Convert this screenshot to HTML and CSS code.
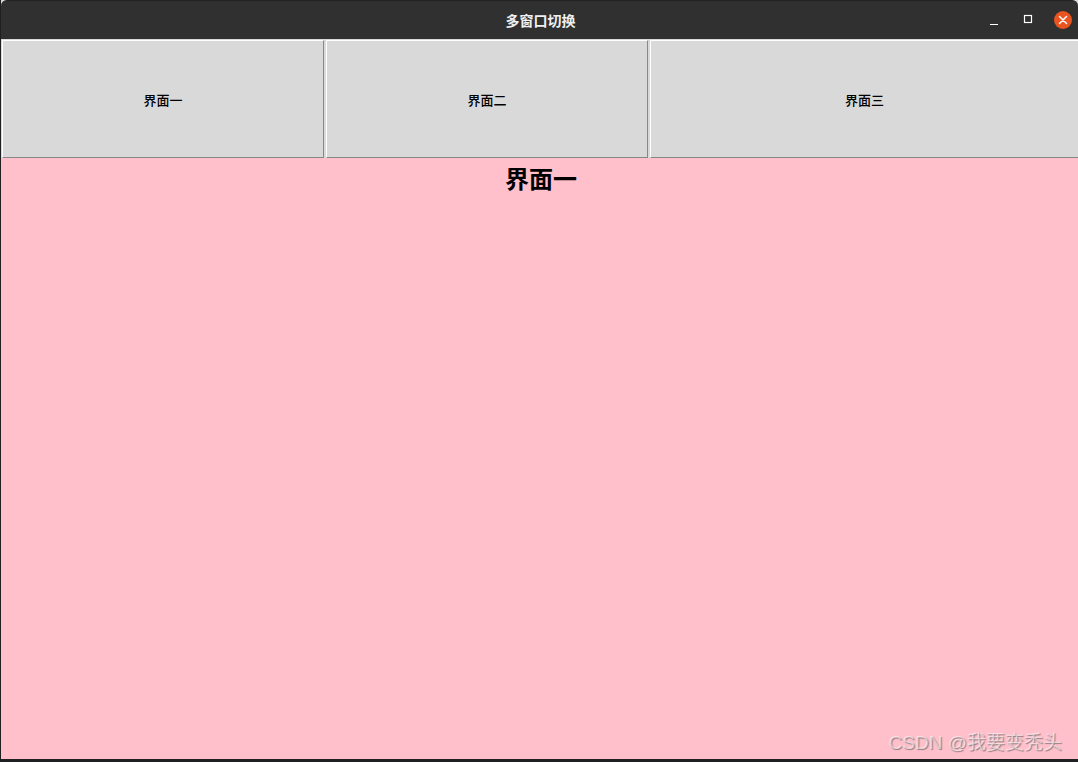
FILE: index.html
```html
<!DOCTYPE html>
<html lang="zh">
<head>
<meta charset="utf-8">
<title>多窗口切换</title>
<link rel="stylesheet" href="styles.css">
</head>
<body>
<div class="window">
  <header class="titlebar">
    <span class="title">多窗口切换</span>
    <div class="controls">
      <span class="ctl ctl-min"><svg width="12" height="12" viewBox="0 0 12 12"><rect x="1" y="8" width="8" height="1" fill="#fff"/></svg></span>
      <span class="ctl ctl-max"><svg width="12" height="12" viewBox="0 0 12 12"><rect x="1.5" y="1.5" width="7" height="7" fill="none" stroke="#fff" stroke-width="1.2"/></svg></span>
      <span class="ctl ctl-close"><svg width="18" height="18" viewBox="0 0 18 18"><circle cx="9" cy="9" r="9" fill="#e95420"/><path d="M5.5 5.5 L12.5 12.5 M12.5 5.5 L5.5 12.5" stroke="#fff" stroke-width="1.5" stroke-linecap="round"/></svg></span>
    </div>
  </header>
  <nav class="tabs">
    <button class="tab">界面一</button>
    <button class="tab">界面二</button>
    <button class="tab">界面三</button>
  </nav>
  <main class="page">
    <h1 class="page-title">界面一</h1>
    <div class="watermark">CSDN @我要变秃头</div>
  </main>
</div>
</body>
</html>
```
FILE: styles.css
```css
html, body {
  margin: 0;
  padding: 0;
}
body {
  width: 1078px;
  height: 762px;
  overflow: hidden;
  background: #1f2022;
  font-family: "Noto Sans CJK SC", "Noto Sans", sans-serif;
}
.window {
  margin-left: 1px;
  width: 1077px;
  height: 759px;
  display: flex;
  flex-direction: column;
  background: #d9d9d9;
}
.titlebar {
  height: 38px;
  flex: none;
  background: #303030;
  border-top: 1px solid #222;
  border-top-left-radius: 6px;
  border-top-right-radius: 6px;
  display: flex;
  align-items: center;
  justify-content: center;
  position: relative;
}
.title {
  color: #f0f0f0;
  font-size: 14px;
  font-weight: 700;
  margin-left: 2px;
}
.controls {
  position: absolute;
  right: 6px;
  top: 10px;
  display: flex;
  align-items: center;
  gap: 16px;
}
.ctl {
  display: flex;
  align-items: center;
  justify-content: center;
  width: 18px;
  height: 18px;
}
.ctl-min svg { margin-top: 4px; }
.tabs {
  flex: none;
  display: grid;
  grid-template-columns: 322px 322px 1fr;
  column-gap: 2px;
  padding: 1px 0 0 1px;
  height: 118px;
  background: #d9d9d9;
}
.tab {
  margin: 0;
  padding: 0;
  background: #d9d9d9;
  border: 1px solid #fff;
  border-right-color: #888;
  border-bottom-color: #888;
  font-family: "Noto Sans CJK SC", "Noto Sans", sans-serif;
  font-size: 13px;
  font-weight: 500;
  color: #000;
  line-height: 1;
}
.tab:last-child { border-right: none; }
.page {
  flex: 1;
  background: #ffc0cb;
  display: flex;
  flex-direction: column;
  align-items: center;
  position: relative;
}
.page-title {
  margin: 3px 0 0 3px;
  font-size: 24px;
  font-weight: 700;
  line-height: 33px;
  color: #000;
}
.watermark {
  position: absolute;
  right: 16px;
  bottom: 5px;
  font-size: 19px;
  color: rgba(255, 255, 255, 0.55);
  text-shadow: 1px 1px 1px rgba(80, 80, 80, 0.6);
  font-family: "Liberation Sans", "Noto Sans CJK SC", sans-serif;
}
```
